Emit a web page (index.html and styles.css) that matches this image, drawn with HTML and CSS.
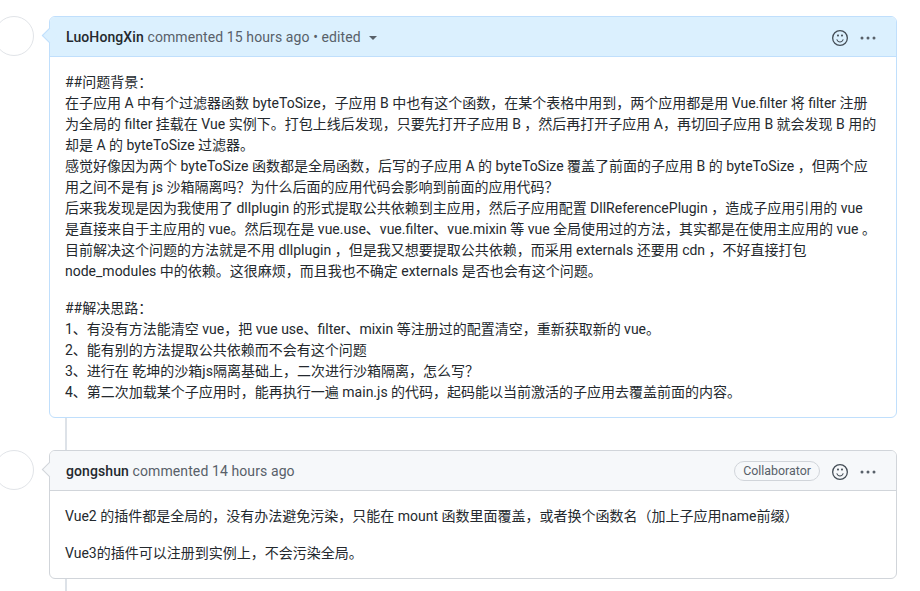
FILE: index.html
```html
<!DOCTYPE html>
<html lang="en">
<head>
    <meta charset="UTF-8">
    <title>Issue comments</title>
    <link rel="stylesheet" href="styles.css">
</head>
<body>

<div class="timeline">
    <div class="comment own">
        <div class="avatar"></div>
        <div class="box">
            <div class="box-header">
                <div class="meta">
                    <strong>LuoHongXin</strong> commented 15 hours ago • edited <span class="caret"></span>
                </div>
                <div class="actions">
                    <svg class="smile" viewBox="0 0 16 16"><path fill-rule="evenodd" d="M8 0a8 8 0 100 16A8 8 0 008 0zm0 14.7A6.7 6.7 0 118 1.3a6.7 6.7 0 010 13.4zM5 5.6c0-.5.4-1 1-1s1 .5 1 1-.4 1-1 1-1-.5-1-1zm4 0c0-.5.4-1 1-1s1 .5 1 1-.4 1-1 1-1-.5-1-1zm2.6 4.2c-.6 1.6-2 2.7-3.6 2.7s-3-1.1-3.6-2.7c-.1-.3.1-.6.4-.6.3-.1.5 0 .6.3.4 1.1 1.4 2 2.6 2s2.2-.9 2.6-2c.1-.3.4-.4.6-.3.3 0 .5.3.4.6z"/></svg>
                    <svg class="dots" viewBox="0 0 16 4"><circle cx="2" cy="2" r="1.5"/><circle cx="8" cy="2" r="1.5"/><circle cx="14" cy="2" r="1.5"/></svg>
                </div>
            </div>
            <div class="box-body">
                <p>##问题背景：<br>
                在子应用 A 中有个过滤器函数 byteToSize，子应用 B 中也有这个函数，在某个表格中用到，两个应用都是用 Vue.filter 将 filter 注册<br>
                为全局的 filter 挂载在 Vue 实例下。打包上线后发现，只要先打开子应用 B ，然后再打开子应用 A，再切回子应用 B 就会发现 B 用的<br>
                却是 A 的 byteToSize 过滤器。<br>
                感觉好像因为两个 byteToSize 函数都是全局函数，后写的子应用 A 的 byteToSize 覆盖了前面的子应用 B 的 byteToSize ，但两个应<br>
                用之间不是有 js 沙箱隔离吗？为什么后面的应用代码会影响到前面的应用代码？<br>
                后来我发现是因为我使用了 dllplugin 的形式提取公共依赖到主应用，然后子应用配置 DllReferencePlugin ，造成子应用引用的 vue<br>
                是直接来自于主应用的 vue。然后现在是 vue.use、vue.filter、vue.mixin 等 vue 全局使用过的方法，其实都是在使用主应用的 vue 。<br>
                目前解决这个问题的方法就是不用 dllplugin ，但是我又想要提取公共依赖，而采用 externals 还要用 cdn ，不好直接打包<br>
                node_modules 中的依赖。这很麻烦，而且我也不确定 externals 是否也会有这个问题。</p>
                <p>##解决思路：<br>
                1、有没有方法能清空 vue，把 vue use、filter、mixin 等注册过的配置清空，重新获取新的 vue。<br>
                2、能有别的方法提取公共依赖而不会有这个问题<br>
                3、进行在 乾坤的沙箱js隔离基础上，二次进行沙箱隔离，怎么写？<br>
                4、第二次加载某个子应用时，能再执行一遍 main.js 的代码，起码能以当前激活的子应用去覆盖前面的内容。</p>
            </div>
        </div>
    </div>

    <div class="comment">
        <div class="avatar"></div>
        <div class="box">
            <div class="box-header">
                <div class="meta">
                    <strong>gongshun</strong> commented 14 hours ago
                </div>
                <div class="actions">
                    <span class="label">Collaborator</span>
                    <svg class="smile" viewBox="0 0 16 16"><path fill-rule="evenodd" d="M8 0a8 8 0 100 16A8 8 0 008 0zm0 14.7A6.7 6.7 0 118 1.3a6.7 6.7 0 010 13.4zM5 5.6c0-.5.4-1 1-1s1 .5 1 1-.4 1-1 1-1-.5-1-1zm4 0c0-.5.4-1 1-1s1 .5 1 1-.4 1-1 1-1-.5-1-1zm2.6 4.2c-.6 1.6-2 2.7-3.6 2.7s-3-1.1-3.6-2.7c-.1-.3.1-.6.4-.6.3-.1.5 0 .6.3.4 1.1 1.4 2 2.6 2s2.2-.9 2.6-2c.1-.3.4-.4.6-.3.3 0 .5.3.4.6z"/></svg>
                    <svg class="dots" viewBox="0 0 16 4"><circle cx="2" cy="2" r="1.5"/><circle cx="8" cy="2" r="1.5"/><circle cx="14" cy="2" r="1.5"/></svg>
                </div>
            </div>
            <div class="box-body">
                <p>Vue2 的插件都是全局的，没有办法避免污染，只能在 mount 函数里面覆盖，或者换个函数名（加上子应用name前缀）</p>
                <p>Vue3的插件可以注册到实例上，不会污染全局。</p>
            </div>
        </div>
    </div>
</div>

</body>
</html>
```

FILE: styles.css
```css
* {
    box-sizing: border-box;
}

html, body {
    height: 100%;
    overflow: hidden;
}

body {
    margin: 0;
    background: #fff;
    color: #24292e;
    font-family: 'Roboto', 'Noto Sans CJK SC', sans-serif;
    font-size: 14px;
    line-height: 21px;
}

.timeline {
    padding: 16px 23px 0 49px;
}

.comment {
    position: relative;
    padding-bottom: 32px;
}

/* vertical line behind the boxes */
.comment::before {
    content: '';
    position: absolute;
    top: 0;
    bottom: 0;
    left: 16px;
    width: 2px;
    background: #dde2e8;
}

.avatar {
    position: absolute;
    top: 0;
    left: -55px;
    width: 40px;
    height: 40px;
    border: 1px solid #e1e4e8;
    border-radius: 50%;
    background: #fff;
}

.box {
    position: relative;
    border: 1px solid #d1d5da;
    border-radius: 6px;
    background: #fff;
}

.box-header {
    position: relative;
    display: flex;
    align-items: center;
    justify-content: space-between;
    height: 40px;
    padding: 2px 20px 0 16px;
    border-bottom: 1px solid #d1d5da;
    border-radius: 5px 5px 0 0;
    background: #f6f8fa;
    color: #586069;
}

/* little arrow pointing at the avatar */
.box-header::before {
    content: '';
    position: absolute;
    top: 13px;
    left: -6px;
    width: 10px;
    height: 10px;
    background: inherit;
    border-left: 1px solid #d1d5da;
    border-bottom: 1px solid #d1d5da;
    transform: rotate(45deg);
}

.own .box,
.own .box-header {
    border-color: #c0dffc;
}

.own .box-header {
    background: #dbf0fe;
}

.own .box-header::before {
    border-color: #c0dffc;
}

.meta {
    letter-spacing: 0.1px;
}

.meta strong {
    color: #24292e;
    font-weight: 500;
}

.caret {
    display: inline-block;
    margin-left: 5px;
    vertical-align: middle;
    border-top: 4px solid #586069;
    border-left: 4px solid transparent;
    border-right: 4px solid transparent;
}

.actions {
    display: flex;
    align-items: center;
}

.smile {
    width: 16px;
    height: 16px;
    fill: #444d56;
}

.dots {
    width: 16px;
    height: 4px;
    margin-left: 12px;
    fill: #586069;
}

.label {
    margin: 0 12px 2px 0;
    padding: 0 8px;
    border: 1px solid #d1d5da;
    border-radius: 10px;
    color: #586069;
    font-size: 12.4px;
    line-height: 18px;
}

.box-body {
    padding: 15px 15px 14px;
}

.box-body p {
    margin: 0 0 16px;
    white-space: nowrap;
}

.box-body p:last-child {
    margin-bottom: 0;
}
```
